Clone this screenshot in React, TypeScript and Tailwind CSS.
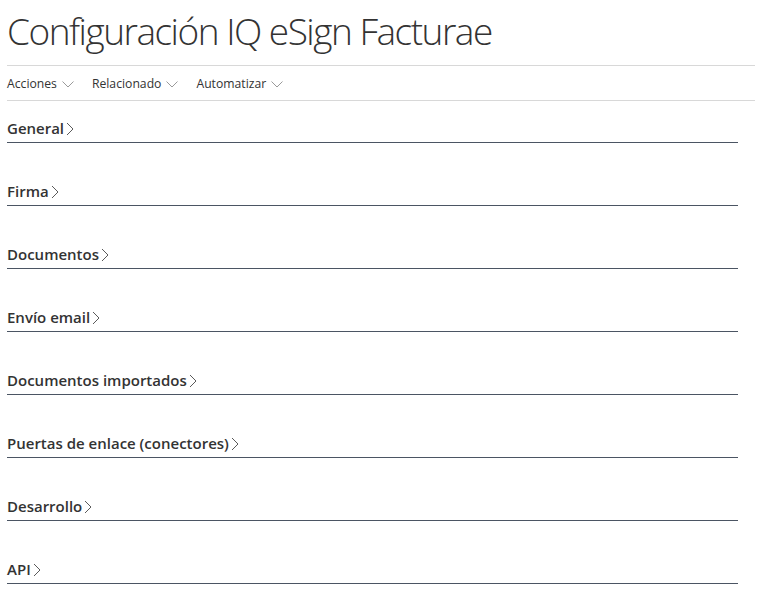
const sections = [
  'General',
  'Firma',
  'Documentos',
  'Envío email',
  'Documentos importados',
  'Puertas de enlace (conectores)',
  'Desarrollo',
  'API',
]

const actions = ['Acciones', 'Relacionado', 'Automatizar']

function Down() {
  return (
    <svg width="12" height="7" viewBox="0 0 12 7" className="text-[#9a9a9a]">
      <path d="M0.5 0.5 L6 6 L11.5 0.5" fill="none" stroke="currentColor" strokeWidth="1" />
    </svg>
  )
}

function Right() {
  return (
    <svg width="8" height="14" viewBox="0 0 8 14" className="text-[#5a5a5a]">
      <path d="M1 1 L7 7 L1 13" fill="none" stroke="currentColor" strokeWidth="1" />
    </svg>
  )
}

export default function App() {
  return (
    <div className="min-h-screen w-[758px] bg-white text-[#333333] font-['Open_Sans',sans-serif]">
      <div className="pl-[7px] pr-[3px]">
        <h1 className="h-[66px] pt-[7px] text-[37px] leading-[48px] font-light tracking-[-1.5px] text-[#333333] border-b border-[#d8d8d8]">
          Configuración IQ eSign Facturae
        </h1>
        <div className="flex h-[35px] items-center gap-[18px] pt-[3px] border-b border-[#d8d8d8]">
          {actions.map((a) => (
            <button key={a} className="flex items-center gap-[5px] text-[12.2px] text-[#333333]">
              {a}
              <Down />
            </button>
          ))}
        </div>
      </div>
      <div className="pl-[7px] pr-[20px]">
        {sections.map((s, i) => (
          <div
            key={s}
            className={`flex h-[42px] items-end gap-[2px] border-b border-[#4b5563] pb-[6px] ${i === 0 ? 'mt-0' : 'mt-[21px]'}`}
          >
            <span className="text-[15px] font-semibold text-[#333333] leading-none">{s}</span>
            <Right />
          </div>
        ))}
      </div>
    </div>
  )
}
